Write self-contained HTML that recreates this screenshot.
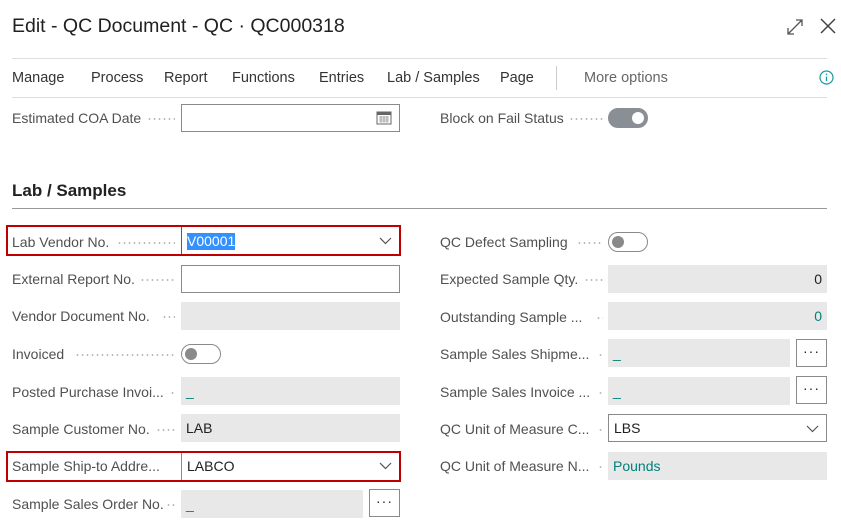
<!DOCTYPE html>
<html><head><meta charset="utf-8"><style>
*{box-sizing:border-box;margin:0;padding:0}
body{width:841px;height:529px;background:#fff;font-family:"Segoe UI","Liberation Sans",sans-serif;color:#212121;position:relative;overflow:hidden}
.a{position:absolute}
.lbl{position:absolute;font-size:14px;color:#505050;white-space:nowrap;line-height:18px}
.dots{position:absolute;height:2px;background-image:radial-gradient(circle,#bbb 0.8px,transparent 1px);background-size:5px 2px;background-repeat:repeat-x}
.f{position:absolute;height:28px;font-size:14px;line-height:28px;padding-left:5px}
.ro{background:#e8e8e8}
.ed{border:1px solid #8a8a8a;background:#fff;line-height:26px}
.tg{position:absolute;width:40px;height:20px;border:1px solid #8a8a8a;border-radius:10px;background:#fff}
.btn{position:absolute;width:31px;height:28px;border:1px solid #8a8a8a;background:#fff;text-align:center;font-size:14px;line-height:22px;letter-spacing:1px}
.teal{color:#00807a}
.red{position:absolute;border:2px solid #c00000}
.menu span{position:absolute;top:70px;font-size:14.5px;color:#333}
</style></head><body>
<div class="a" style="left:12px;top:15px;font-size:19.5px;color:#212121">Edit - QC Document - QC · QC000318</div>
<svg class="a" style="left:786px;top:18px" width="18" height="18" viewBox="0 0 18 18" fill="none" stroke="#555" stroke-width="1.3"><path d="M2 16L16 2M10 2h6v6M2 10v6h6"/></svg>
<svg class="a" style="left:819px;top:17px" width="18" height="18" viewBox="0 0 18 18" stroke="#444" stroke-width="1.5"><path d="M2 2L16 16M16 2L2 16"/></svg>
<div class="a" style="left:12px;top:58px;width:815px;height:1px;background:#ddd"></div>
<div class="menu">
<span style="left:12px">Manage</span><span style="left:91px">Process</span><span style="left:164px">Report</span><span style="left:232px">Functions</span><span style="left:319px">Entries</span><span style="left:387px">Lab / Samples</span><span style="left:500px">Page</span>
<span style="left:584px;color:#666">More options</span></div>
<div class="a" style="left:556px;top:66px;width:1px;height:24px;background:#ccc"></div>
<svg class="a" style="left:819px;top:70px" width="15" height="15" viewBox="0 0 15 15"><circle cx="7.5" cy="7.5" r="6.5" fill="none" stroke="#1a9ba0" stroke-width="1.2"/><path d="M7.5 6.5v4.5" stroke="#1a9ba0" stroke-width="1.3"/><circle cx="7.5" cy="4.3" r=".8" fill="#1a9ba0"/></svg>
<div class="a" style="left:12px;top:97px;width:815px;height:1px;background:#ddd"></div>

<div class="lbl" style="left:12px;top:109px">Estimated COA Date</div><div class="dots" style="left:147px;width:28px;top:118px"></div>
<div class="f ed" style="left:181px;top:104px;width:219px"></div>
<svg class="a" style="left:376px;top:110px" width="16" height="15" viewBox="0 0 16 15"><rect x="1" y="2" width="14" height="12" fill="none" stroke="#666"/><rect x="1" y="2" width="14" height="3" fill="#666"/><path d="M3 7h10M3 9h10M3 11h10M5 6v7M8 6v7M11 6v7" stroke="#999" stroke-width=".8"/></svg>
<div class="lbl" style="left:440px;top:109px">Block on Fail Status</div><div class="dots" style="left:569px;width:34px;top:118px"></div>
<div class="tg" style="left:608px;top:108px;background:#8a8f96;border-color:#8a8f96"><i style="position:absolute;left:23px;top:3px;width:12px;height:12px;border-radius:50%;background:#fff"></i></div>

<div class="a" style="left:12px;top:181px;font-size:17px;font-weight:600;color:#212121">Lab / Samples</div>
<div class="a" style="left:12px;top:208px;width:815px;height:1px;background:#999"></div>

<div class="lbl" style="left:12px;top:233px">Lab Vendor No.</div><div class="dots" style="left:117px;width:58px;top:242px"></div>
<div class="f" style="left:181px;top:227px;width:218px;border-left:1px solid #00807a"><span style="background:#3390ff;color:#fff;line-height:17px;display:inline-block">V00001</span></div>
<svg class="a" style="left:379px;top:237px" width="13" height="8"><path d="M1 1l5.5 5.5L12 1" fill="none" stroke="#555" stroke-width="1.2"/></svg>
<div class="red" style="left:6px;top:225px;width:395px;height:31px"></div>

<div class="lbl" style="left:12px;top:270px">External Report No.</div><div class="dots" style="left:140px;width:35px;top:279px"></div>
<div class="f ed" style="left:181px;top:265px;width:219px"></div>
<div class="lbl" style="left:12px;top:307px">Vendor Document No.</div><div class="dots" style="left:162px;width:13px;top:316px"></div>
<div class="f ro" style="left:181px;top:302px;width:219px"></div>
<div class="lbl" style="left:12px;top:345px">Invoiced</div><div class="dots" style="left:75px;width:100px;top:354px"></div>
<div class="tg" style="left:181px;top:344px"></div><div class="a" style="left:185px;top:348px;width:12px;height:12px;border-radius:50%;background:#8a8a8a"></div>
<div class="lbl" style="left:12px;top:383px">Posted Purchase Invoi...</div><div class="dots" style="left:170px;width:5px;top:392px"></div>
<div class="f ro teal" style="left:181px;top:377px;width:219px">_</div>
<div class="lbl" style="left:12px;top:420px">Sample Customer No.</div><div class="dots" style="left:156px;width:19px;top:429px"></div>
<div class="f ro" style="left:181px;top:414px;width:219px">LAB</div>
<div class="lbl" style="left:12px;top:457px">Sample Ship-to Addre...</div>
<div class="f" style="left:181px;top:452px;width:218px;border-left:1px solid #8a8a8a">LABCO</div>
<svg class="a" style="left:379px;top:462px" width="13" height="8"><path d="M1 1l5.5 5.5L12 1" fill="none" stroke="#555" stroke-width="1.2"/></svg>
<div class="red" style="left:6px;top:451px;width:395px;height:31px"></div>
<div class="lbl" style="left:12px;top:495px">Sample Sales Order No.</div><div class="dots" style="left:166px;width:9px;top:504px"></div>
<div class="f ro teal" style="left:181px;top:490px;width:182px">_</div>
<div class="btn" style="left:369px;top:489px">···</div>

<div class="lbl" style="left:440px;top:233px">QC Defect Sampling</div><div class="dots" style="left:577px;width:26px;top:242px"></div>
<div class="tg" style="left:608px;top:232px"></div><div class="a" style="left:612px;top:236px;width:12px;height:12px;border-radius:50%;background:#8a8a8a"></div>
<div class="lbl" style="left:440px;top:270px">Expected Sample Qty.</div><div class="dots" style="left:584px;width:19px;top:279px"></div>
<div class="f ro" style="left:608px;top:265px;width:219px;text-align:right;padding-right:5px">0</div>
<div class="lbl" style="left:440px;top:308px">Outstanding Sample ...</div><div class="dots" style="left:596px;width:7px;top:317px"></div>
<div class="f ro teal" style="left:608px;top:302px;width:219px;text-align:right;padding-right:5px">0</div>
<div class="lbl" style="left:440px;top:345px">Sample Sales Shipme...</div><div class="dots" style="left:598px;width:5px;top:354px"></div>
<div class="f ro teal" style="left:608px;top:339px;width:182px">_</div>
<div class="btn" style="left:796px;top:339px">···</div>
<div class="lbl" style="left:440px;top:383px">Sample Sales Invoice ...</div><div class="dots" style="left:598px;width:5px;top:392px"></div>
<div class="f ro teal" style="left:608px;top:377px;width:182px">_</div>
<div class="btn" style="left:796px;top:376px">···</div>
<div class="lbl" style="left:440px;top:420px">QC Unit of Measure C...</div><div class="dots" style="left:598px;width:5px;top:429px"></div>
<div class="f ed" style="left:608px;top:414px;width:219px">LBS</div>
<svg class="a" style="left:806px;top:425px" width="13" height="8"><path d="M1 1l5.5 5.5L12 1" fill="none" stroke="#555" stroke-width="1.2"/></svg>
<div class="lbl" style="left:440px;top:457px">QC Unit of Measure N...</div><div class="dots" style="left:598px;width:5px;top:466px"></div>
<div class="f ro teal" style="left:608px;top:452px;width:219px">Pounds</div>
</body></html>
